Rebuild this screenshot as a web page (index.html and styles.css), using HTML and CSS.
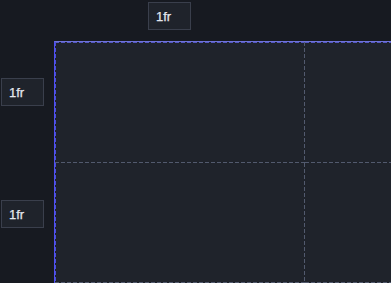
FILE: index.html
```html
<!DOCTYPE html>
<html lang="en">
<head>
  <meta charset="UTF-8">
  <title>Grid Inspector</title>
  <link rel="stylesheet" href="styles.css">
</head>
<body>
  <div class="layout">
    <div class="corner"></div>
    <div class="col-ruler">
      <div class="track-label">1fr</div>
    </div>
    <div class="row-ruler">
      <div class="row-slot"><div class="track-label">1fr</div></div>
      <div class="row-slot"><div class="track-label">1fr</div></div>
    </div>
    <div class="grid-area">
      <div class="cell first-row first-col"></div>
      <div class="cell first-row"></div>
      <div class="cell first-col"></div>
      <div class="cell"></div>
    </div>
  </div>
</body>
</html>
```

FILE: styles.css
```css
html, body {
  margin: 0;
  padding: 0;
  background-color: #171a21;
  overflow: hidden;
}
body {
  width: 391px;
  height: 283px;
  font-family: "Liberation Sans", Arial, sans-serif;
  font-size: 13px;
  color: #e4e7ee;
  -webkit-text-stroke: 0.25px #e4e7ee;
}
.layout {
  display: grid;
  grid-template-columns: 54px 1fr;
  grid-template-rows: 41px 242px;
  overflow: hidden;
  height: 283px;
}
.col-ruler {
  padding: 2px 0 0 94px;
}
.row-ruler {
  display: flex;
  flex-direction: column;
}
.row-slot {
  height: 122px;
  box-sizing: border-box;
  padding: 37px 0 0 1px;
}
.row-slot + .row-slot {
  height: 120px;
}
.track-label {
  width: 43px;
  height: 28px;
  box-sizing: border-box;
  padding-left: 7px;
  line-height: 27px;
  background-color: #1f232b;
  border: 1px solid #3a3f4c;
}
.grid-area {
  display: grid;
  grid-template-columns: 250px 1fr;
  grid-template-rows: 121px 120px;
  background-color: #1f232b;
  border-top: 1px solid #6f73da;
  border-left: 1px solid #5151f2;
  overflow: hidden;
}
.cell {
  box-sizing: border-box;
  background-image:
    repeating-linear-gradient(to bottom, #525a6e 0 4px, transparent 4px 6px),
    repeating-linear-gradient(to right, #525a6e 0 4px, transparent 4px 6px);
  background-size: 1px 100%, 100% 1px;
  background-position: right top, left bottom;
  background-repeat: no-repeat;
}
.cell.first-row {
  background-image:
    repeating-linear-gradient(to bottom, #525a6e 0 4px, transparent 4px 6px),
    repeating-linear-gradient(to right, #525a6e 0 4px, transparent 4px 6px),
    repeating-linear-gradient(to right, #5458c0 0 4px, transparent 4px 6px);
  background-size: 1px 100%, 100% 1px, 100% 1px;
  background-position: right top, left bottom, left top;
}
.cell.first-col {
  background-image:
    repeating-linear-gradient(to bottom, #525a6e 0 4px, transparent 4px 6px),
    repeating-linear-gradient(to right, #525a6e 0 4px, transparent 4px 6px),
    repeating-linear-gradient(to bottom, #4a4ed8 0 4px, transparent 4px 6px);
  background-size: 1px 100%, 100% 1px, 1px 100%;
  background-position: right top, left bottom, left top;
}
.cell.first-row.first-col {
  background-image:
    repeating-linear-gradient(to bottom, #525a6e 0 4px, transparent 4px 6px),
    repeating-linear-gradient(to right, #525a6e 0 4px, transparent 4px 6px),
    repeating-linear-gradient(to right, #5458c0 0 4px, transparent 4px 6px),
    repeating-linear-gradient(to bottom, #4a4ed8 0 4px, transparent 4px 6px);
  background-size: 1px 100%, 100% 1px, 100% 1px, 1px 100%;
  background-position: right top, left bottom, left top, left top;
}
.cell:nth-child(2n) {
  background-size: 0 0, 100% 1px, 100% 1px;
}
```
